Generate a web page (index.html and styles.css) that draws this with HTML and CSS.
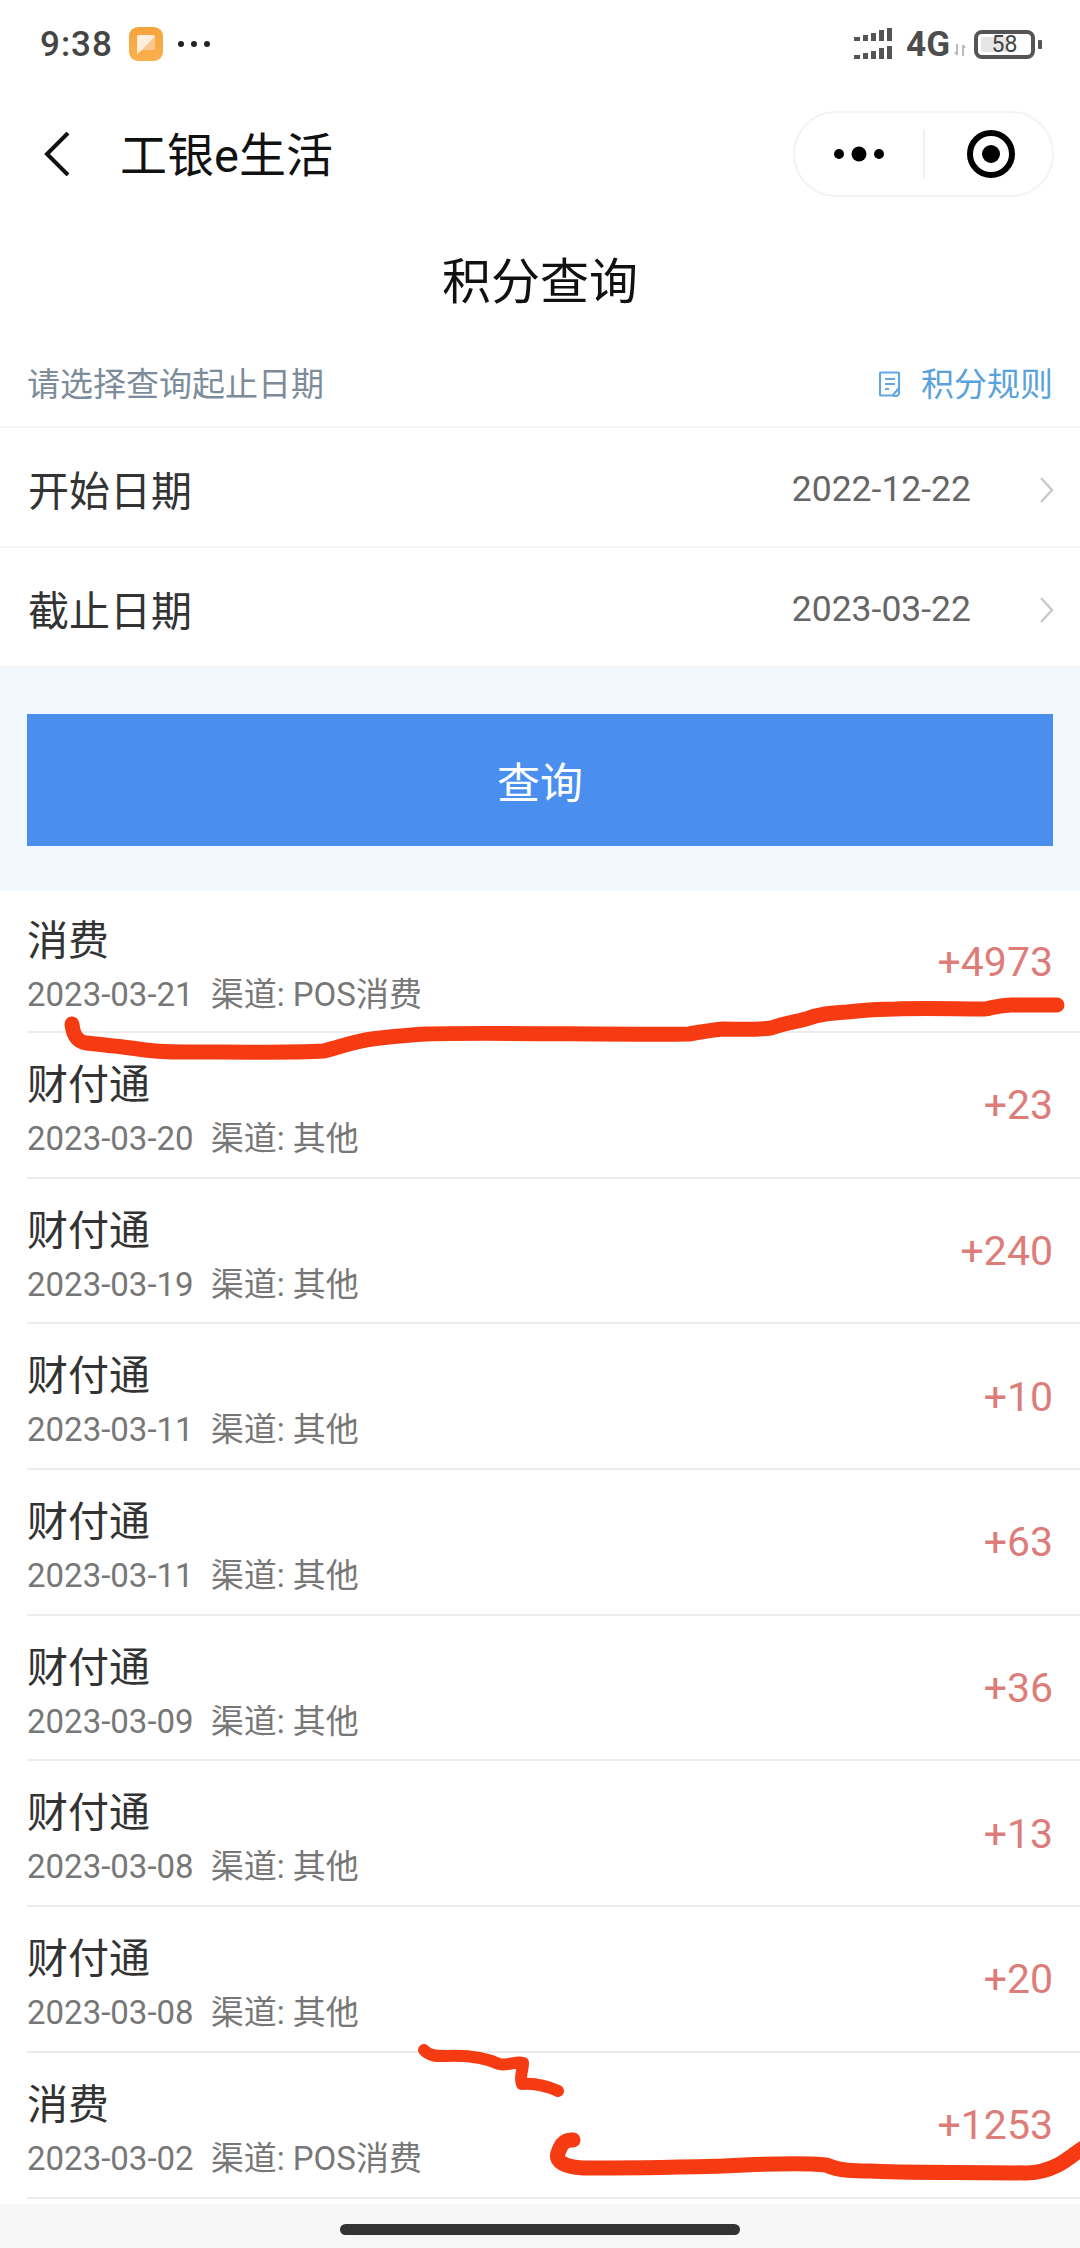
FILE: index.html
```html
<!DOCTYPE html>
<html lang="zh-CN">
<head>
<meta charset="utf-8">
<title>积分查询</title>
<link rel="stylesheet" href="styles.css">
</head>
<body>
<div class="page">
  <div class="status">
    <div class="status-left">
      <span class="time">9:38</span>
      <svg class="app-icon" width="34" height="34" viewBox="0 0 34 34">
        <defs><linearGradient id="ai" x1="0" y1="0" x2="0" y2="1"><stop offset="0" stop-color="#f5a43c"/><stop offset="1" stop-color="#fbb04e"/></linearGradient></defs>
        <rect width="34" height="34" rx="9" fill="url(#ai)"/>
        <path d="M8 10a2 2 0 0 1 2-2h14a2 2 0 0 1 2 2v11a2 2 0 0 1-2 2H13l-5 4z" fill="#fdeedd"/>
        <path d="M26 9v12a2 2 0 0 1-2 2H13z" fill="#fbc78e"/>
      </svg>
      <svg width="34" height="8" viewBox="0 0 34 8" fill="#222"><circle cx="4" cy="4" r="3"/><circle cx="17" cy="4" r="3"/><circle cx="30" cy="4" r="3"/></svg>
    </div>
    <div class="status-right">
      <svg width="40" height="32" viewBox="0 0 40 32" fill="#555">
        <rect x="0" y="9" width="6" height="4"/><rect x="9" y="7" width="5" height="6"/><rect x="17" y="5" width="5" height="8"/><rect x="25" y="2" width="5" height="11"/><rect x="33" y="0" width="5" height="13"/>
        <rect x="0" y="27" width="6" height="4"/><rect x="9" y="25" width="5" height="6"/><rect x="17" y="23" width="5" height="8"/><rect x="25" y="20" width="5" height="11"/><rect x="33" y="18" width="5" height="13"/>
      </svg>
      <span class="net">4G</span>
      <svg class="arrows" width="12" height="12" viewBox="0 0 12 12" fill="none" stroke="#bbb" stroke-width="2"><path d="M3 0v11M1 8l2 3M9 12V1M11 4L9 1"/></svg>
      <div class="battery"><div class="battery-level"></div><span class="battery-text">58</span></div>
      <div class="battery-nub"></div>
    </div>
  </div>

  <div class="nav">
    <svg class="back" width="26" height="44" viewBox="0 0 26 44" fill="none" stroke="#111" stroke-width="4"><path d="M24 1L3 22l21 21"/></svg>
    <span class="nav-title">工银e生活</span>
    <div class="capsule">
      <svg width="50" height="16" viewBox="0 0 50 16" fill="#000"><circle cx="5" cy="8" r="5"/><circle cx="25" cy="8" r="7.5"/><circle cx="45" cy="8" r="5"/></svg>
      <div class="capsule-line"></div>
      <svg width="48" height="48" viewBox="0 0 48 48"><circle cx="24" cy="24" r="21" fill="none" stroke="#000" stroke-width="6"/><circle cx="24" cy="24" r="9" fill="#000"/></svg>
    </div>
  </div>

  <div class="page-title">积分查询</div>

  <div class="hint">
    <span class="hint-text">请选择查询起止日期</span>
    <span class="rules">
      <svg width="22" height="26" viewBox="0 0 22 26" fill="none" stroke="#63a7e2" stroke-width="2.2"><path d="M14 24.500H2a1 1 0 0 1-1-1V2.500a1 1 0 0 1 1-1h17a1 1 0 0 1 1 1V17M6 8h10M6 13h10M6 18h4M20 17v4a3.500 3.500 0 0 1-6 3z"/></svg>
      积分规则
    </span>
  </div>

  <div class="field">
    <span class="field-label">开始日期</span>
    <span class="field-value">2022-12-22</span>
    <svg class="chev" width="14" height="26" viewBox="0 0 14 26" fill="none" stroke="#c9c9c9" stroke-width="2.400"><path d="M1 1l11 12L1 25"/></svg>
  </div>
  <div class="field">
    <span class="field-label">截止日期</span>
    <span class="field-value">2023-03-22</span>
    <svg class="chev" width="14" height="26" viewBox="0 0 14 26" fill="none" stroke="#c9c9c9" stroke-width="2.400"><path d="M1 1l11 12L1 25"/></svg>
  </div>

  <div class="action"><div class="btn">查询</div></div>

  <div class="list">
    <div class="row"><div class="row-main"><div class="row-title">消费</div><div class="row-sub"><span>2023-03-21</span><span>渠道: POS消费</span></div></div><span class="amount">+4973</span></div>
    <div class="row"><div class="row-main"><div class="row-title">财付通</div><div class="row-sub"><span>2023-03-20</span><span>渠道: 其他</span></div></div><span class="amount">+23</span></div>
    <div class="row"><div class="row-main"><div class="row-title">财付通</div><div class="row-sub"><span>2023-03-19</span><span>渠道: 其他</span></div></div><span class="amount">+240</span></div>
    <div class="row"><div class="row-main"><div class="row-title">财付通</div><div class="row-sub"><span>2023-03-11</span><span>渠道: 其他</span></div></div><span class="amount">+10</span></div>
    <div class="row"><div class="row-main"><div class="row-title">财付通</div><div class="row-sub"><span>2023-03-11</span><span>渠道: 其他</span></div></div><span class="amount">+63</span></div>
    <div class="row"><div class="row-main"><div class="row-title">财付通</div><div class="row-sub"><span>2023-03-09</span><span>渠道: 其他</span></div></div><span class="amount">+36</span></div>
    <div class="row"><div class="row-main"><div class="row-title">财付通</div><div class="row-sub"><span>2023-03-08</span><span>渠道: 其他</span></div></div><span class="amount">+13</span></div>
    <div class="row"><div class="row-main"><div class="row-title">财付通</div><div class="row-sub"><span>2023-03-08</span><span>渠道: 其他</span></div></div><span class="amount">+20</span></div>
    <div class="row"><div class="row-main"><div class="row-title">消费</div><div class="row-sub"><span>2023-03-02</span><span>渠道: POS消费</span></div></div><span class="amount">+1253</span></div>
  </div>

  <div class="home-bar"><div class="home-pill"></div></div>

  <svg class="scribble" width="1080" height="2248" viewBox="0 0 1080 2248" fill="none" stroke="#f63a12" stroke-linecap="round" stroke-linejoin="round">
    <path stroke-width="15" d="M72 1024C73 1034 76 1041 86 1043C105 1045 125 1047 138 1049C155 1052 170 1052 186 1052C230 1052 290 1053 324 1051C340 1047 355 1041 372 1039C390 1037 405 1035 427 1034C480 1032 620 1035 689 1034C700 1032 712 1030 723 1029C740 1029 755 1030 771 1028C785 1023 795 1022 806 1019C820 1014 830 1013 847 1012C865 1010 880 1009 895 1009C925 1008 955 1009 985 1009C995 1007 1002 1005 1012 1005C1030 1005 1045 1005 1057 1005"/>
    <path stroke-width="12" d="M424 2050C429 2056 436 2056 446 2056C466 2055 486 2058 499 2064C508 2066 516 2061 523 2063C523 2070 519 2078 522 2084C534 2083 547 2086 558 2091"/>
    <path stroke-width="15" d="M573 2140C563 2139 560 2147 558 2153C555 2161 564 2167 583 2168C640 2168 680 2167 723 2166C760 2164 800 2162 826 2165C840 2171 855 2171 870 2171C900 2173 960 2172 1026 2173C1040 2173 1050 2169 1058 2165C1066 2161 1075 2153 1085 2147"/>
  </svg>
</div>
</body>
</html>
```

FILE: styles.css
```css
* { box-sizing: border-box; }
html, body { margin: 0; padding: 0; background: #fff; }
body { font-family: Roboto, "Noto Sans CJK SC", sans-serif; }

.page { position: relative; width: 1080px; height: 2248px; display: flex; flex-direction: column; overflow: hidden; background: #fff; }

.status { height: 88px; flex: none; display: flex; justify-content: space-between; align-items: center; padding: 0 38px 0 40px; }
.status-left { display: flex; align-items: center; }
.time { font-size: 35px; font-weight: 500; color: #444; letter-spacing: 1px; line-height: 1; width: 89px; }
.app-icon { margin-right: 14px; }
.status-right { display: flex; align-items: center; }
.net { font-size: 35px; font-weight: 700; color: #4d4d4d; margin-left: 12px; line-height: 1; }
.arrows { margin: 12px 8px 0 4px; }
.battery { position: relative; width: 61px; height: 29px; border: 4px solid #555; border-radius: 8px; padding: 3px; }
.battery-level { width: 58%; height: 100%; background: #e6e6e6; border-radius: 2px; }
.battery-text { position: absolute; inset: 0; display: flex; align-items: center; justify-content: center; font-size: 23px; color: #444; line-height: 1; }
.battery-nub { width: 4px; height: 9px; background: #555; border-radius: 1px; margin-left: 3px; }

.nav { height: 132px; flex: none; display: flex; align-items: center; padding: 0 26px 0 44px; }
.back { flex: none; }
.nav-title { font-size: 47px; color: #111; margin-left: 50px; line-height: 1; flex: 1; position: relative; top: 1px; }
.capsule { width: 261px; height: 86px; border: 2px solid #f3f3f3; border-radius: 43px; display: flex; align-items: center; padding: 0 17px 0 39px; }
.capsule-line { width: 2px; height: 50px; background: #f0f0f0; margin: 0 42px 0 39px; flex: none; }

.page-title { height: 115px; flex: none; display: flex; align-items: center; justify-content: center; font-size: 49px; color: #111; }

.hint { height: 93px; flex: none; display: flex; justify-content: space-between; align-items: center; padding: 7px 27px 0 27px; border-bottom: 2px solid #f4f4f4; }
.hint-text { font-size: 33px; color: #7c8c9a; line-height: 1; }
.rules { display: flex; align-items: center; gap: 20px; font-size: 33px; color: #5aa2dc; line-height: 1; }

.field { height: 120px; flex: none; display: flex; align-items: center; padding: 10px 26px 0 28px; border-bottom: 2px solid #f4f4f4; }
.field:last-of-type { border-bottom: 0; }
.field-label { flex: 1; font-size: 41px; color: #333; line-height: 1; }
.field-value { font-size: 35.500px; color: #666; line-height: 1; margin-right: 69px; position: relative; top: -2px; }
.chev { flex: none; position: relative; top: -2px; }

.action { height: 223px; flex: none; padding: 46px 27px 45px; background: #f2f9fe; }
.btn { height: 132px; display: flex; align-items: center; justify-content: center; background: #4a8ff0; color: #fff; font-size: 43px; }

.list { flex: 1; min-height: 0; }
.row { height: 145.700px; margin-left: 27px; padding: 0 27px 0 0; display: flex; justify-content: space-between; align-items: center; border-bottom: 2px solid #ececec; }
.row:first-child { height: 142px; }
.row-main { padding-top: 14px; }
.row-title { font-size: 41px; line-height: 53px; color: #333; }
.row-sub { display: flex; gap: 17px; font-size: 33px; line-height: 53px; color: #777; }
.amount { font-size: 41px; color: #dc7d7a; line-height: 1; position: relative; top: 1px; }

.home-bar { height: 44px; flex: none; background: #f7f7f7; display: flex; justify-content: center; padding-top: 20px; }
.home-pill { width: 400px; height: 11px; border-radius: 6px; background: #333; }

.scribble { position: absolute; left: 0; top: 0; pointer-events: none; }
```
